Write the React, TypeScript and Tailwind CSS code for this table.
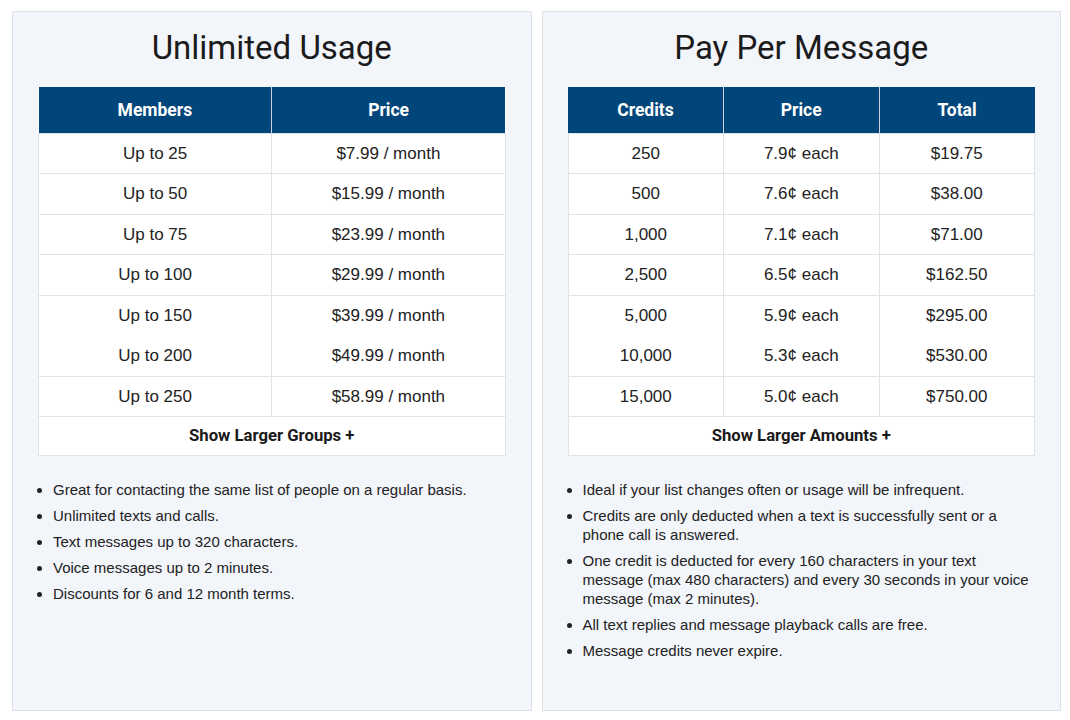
import React from 'react';

const groups = [
  ['Up to 25', '$7.99 / month'],
  ['Up to 50', '$15.99 / month'],
  ['Up to 75', '$23.99 / month'],
  ['Up to 100', '$29.99 / month'],
  ['Up to 150', '$39.99 / month'],
  ['Up to 200', '$49.99 / month'],
  ['Up to 250', '$58.99 / month'],
];

const credits = [
  ['250', '7.9¢ each', '$19.75'],
  ['500', '7.6¢ each', '$38.00'],
  ['1,000', '7.1¢ each', '$71.00'],
  ['2,500', '6.5¢ each', '$162.50'],
  ['5,000', '5.9¢ each', '$295.00'],
  ['10,000', '5.3¢ each', '$530.00'],
  ['15,000', '5.0¢ each', '$750.00'],
];

const unlimitedNotes = [
  'Great for contacting the same list of people on a regular basis.',
  'Unlimited texts and calls.',
  'Text messages up to 320 characters.',
  'Voice messages up to 2 minutes.',
  'Discounts for 6 and 12 month terms.',
];

const payNotes = [
  'Ideal if your list changes often or usage will be infrequent.',
  'Credits are only deducted when a text is successfully sent or a phone call is answered.',
  'One credit is deducted for every 160 characters in your text message (max 480 characters) and every 30 seconds in your voice message (max 2 minutes).',
  'All text replies and message playback calls are free.',
  'Message credits never expire.',
];

function PriceTable({
  headers,
  rows,
  footer,
}: {
  headers: string[];
  rows: string[][];
  footer: string;
}) {
  return (
    <table className="w-full table-fixed border-collapse bg-white">
      <thead>
        <tr className="h-[46px] bg-[#01467a]">
          {headers.map((h, i) => (
            <th
              key={h}
              className={`font-['Roboto',sans-serif] text-[17.5px] font-bold text-white ${
                i > 0 ? 'border-l border-[#c9d4e0]' : ''
              }`}
            >
              {h}
            </th>
          ))}
        </tr>
      </thead>
      <tbody className="font-['Liberation_Sans',Arial,sans-serif] text-[17px] text-[#222]">
        {rows.map((r, ri) => (
          <tr
            key={ri}
            className={`h-[40.5px] ${ri === 5 ? '' : 'border-t'} border-x border-[#dfe3e8]`}
          >
            {r.map((c, ci) => (
              <td
                key={ci}
                className={`text-center ${ci > 0 ? 'border-l border-[#dfe3e8]' : ''}`}
              >
                {c}
              </td>
            ))}
          </tr>
        ))}
        <tr className="h-[39px] border border-[#dfe3e8]">
          <td
            colSpan={headers.length}
            className="text-center font-['Roboto',sans-serif] text-[16.7px] font-bold text-[#1a1a1a]"
          >
            {footer}
          </td>
        </tr>
      </tbody>
    </table>
  );
}

function Notes({ items }: { items: string[] }) {
  return (
    <ul className="mt-[24px] list-disc pl-[15px] font-['Liberation_Sans',Arial,sans-serif] text-[15px] leading-[19px] text-[#222]">
      {items.map((t) => (
        <li key={t} className="mb-[7px]">
          {t}
        </li>
      ))}
    </ul>
  );
}

function Panel({ title, children }: { title: string; children: React.ReactNode }) {
  return (
    <div className="flex-1 border border-[#dce1e8] bg-[#f2f5fa] px-[25px] pt-[16px]">
      <h2 className="mb-[19px] text-center font-['Roboto',sans-serif] text-[33px] leading-[40px] font-normal text-[#1b1b1b]">
        {title}
      </h2>
      {children}
    </div>
  );
}

export default function App() {
  return (
    <div className="flex h-[720px] gap-[10px] bg-white pt-[11px] pb-[9px] pl-[12px] pr-[9px]">
      <Panel title="Unlimited Usage">
        <PriceTable headers={['Members', 'Price']} rows={groups} footer="Show Larger Groups +" />
        <Notes items={unlimitedNotes} />
      </Panel>
      <Panel title="Pay Per Message">
        <PriceTable
          headers={['Credits', 'Price', 'Total']}
          rows={credits}
          footer="Show Larger Amounts +"
        />
        <Notes items={payNotes} />
      </Panel>
    </div>
  );
}
